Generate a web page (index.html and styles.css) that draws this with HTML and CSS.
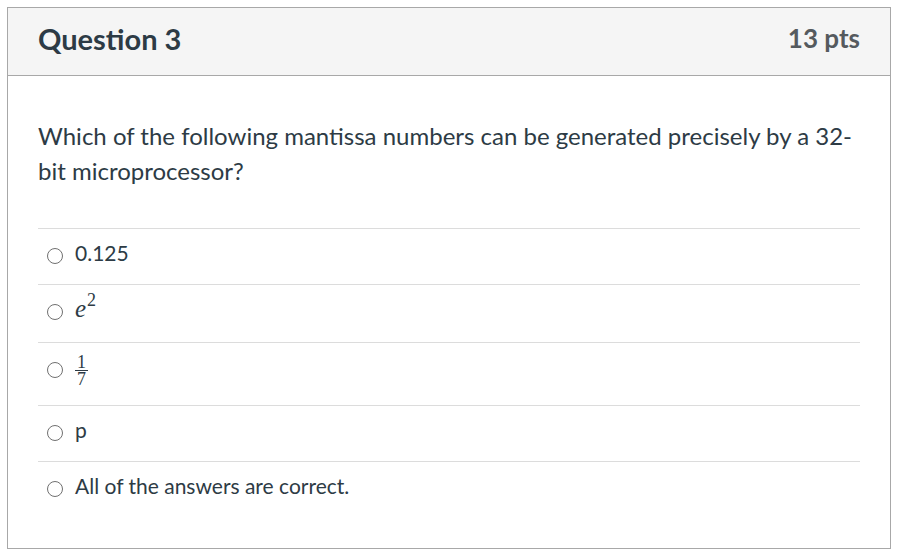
FILE: index.html
```
<!DOCTYPE html>
<html>
<head>
<meta charset="utf-8">
<link rel="stylesheet" href="styles.css">
</head>
<body>
<div class="card">
  <div class="header">
    <h2 class="title">Question 3</h2>
    <div class="pts">13 pts</div>
  </div>
  <div class="content">
    <p class="question">Which of the following mantissa numbers can be generated precisely by a 32-bit microprocessor?</p>
    <div class="answers">
      <label class="answer"><span class="radio"></span><span class="atext">0.125</span></label>
      <label class="answer answer-sup"><span class="radio"></span><span class="atext"><span class="math"><i class="mi">e</i><sup class="sup">2</sup></span></span></label>
      <label class="answer answer-frac"><span class="radio"></span><span class="atext"><span class="math"><span class="frac"><span class="num">1</span><span class="bar"></span><span class="den">7</span></span></span></span></label>
      <label class="answer"><span class="radio"></span><span class="atext">p</span></label>
      <label class="answer"><span class="radio"></span><span class="atext">All of the answers are correct.</span></label>
    </div>
  </div>
</div>
</body>
</html>
```
FILE: styles.css
```
body {
  margin: 7px 0 0 7px;
  font-family: Lato, "Liberation Sans", sans-serif;
  color: #2d3b45;
  background: #fff;
}
.card {
  width: 884px;
  height: 542px;
  border: 1px solid #a8a8a8;
  box-sizing: border-box;
}
.header {
  display: flex;
  justify-content: space-between;
  align-items: flex-start;
  background: #f5f5f5;
  border-bottom: 1px solid #a8a8a8;
  height: 68px;
  box-sizing: border-box;
  padding: 13px 30px 0 30px;
}
.title {
  margin: 0;
  font-size: 29px;
  line-height: 35px;
  font-weight: 700;
  color: #2d3b45;
}
.pts {
  font-size: 26px;
  line-height: 35px;
  font-weight: 700;
  color: #555a5e;
}
.content {
  padding: 0 30px;
}
.question {
  margin: 0;
  padding-top: 42px;
  font-size: 24px;
  line-height: 35px;
  color: #2d3b45;
}
.answers {
  margin-top: 40px;
}
.answer {
  display: block;
  border-top: 1px solid #dcdcdc;
  height: 56px;
  box-sizing: border-box;
  padding: 8px 0 0 9px;
  font-size: 21px;
  line-height: 31px;
  color: #2d3b45;
}
.answer-sup {
  height: 58px;
}
.answer-frac {
  height: 63px;
}
.radio {
  display: inline-block;
  width: 16px;
  height: 16px;
  border: 1.5px solid #707070;
  border-radius: 50%;
  box-sizing: border-box;
  margin-right: 12px;
  vertical-align: -3px;
}
.math {
  font-family: "Liberation Serif", "DejaVu Serif", serif;
}
.mi {
  font-style: italic;
  font-size: 25px;
  line-height: 0;
}
.sup {
  font-size: 18px;
  line-height: 0;
  vertical-align: 11px;
  margin-left: 1px;
}
.frac {
  display: inline-flex;
  flex-direction: column;
  align-items: center;
  vertical-align: 7px;
  line-height: 14px;
  font-size: 18px;
  width: 13px;
}
.bar {
  align-self: stretch;
  border-top: 1px solid #2d3b45;
  margin: 1px 0 1px;
}
```
